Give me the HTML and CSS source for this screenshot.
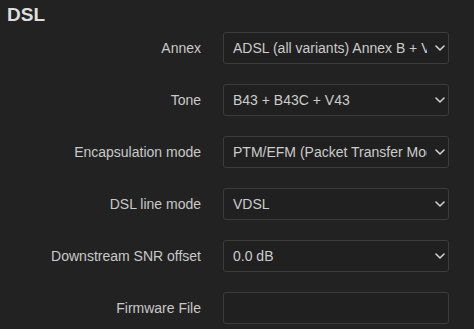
FILE: index.html
```html
<!DOCTYPE html>
<html>
<head>
<meta charset="utf-8">
<link rel="stylesheet" href="styles.css">
</head>
<body>
<div class="panel">
  <h3 class="title">DSL</h3>
  <div class="form">
    <label class="lbl">Annex</label>
    <div class="field">
      <select class="ctl"><option>ADSL (all variants) Annex B + V</option></select>
      <svg class="chev" viewBox="0 0 10 6"><path d="M1 1 L5 5 L9 1" fill="none" stroke="#cfcfcf" stroke-width="1.6" stroke-linecap="round" stroke-linejoin="round"/></svg>
    </div>
    <label class="lbl">Tone</label>
    <div class="field">
      <select class="ctl"><option>B43 + B43C + V43</option></select>
      <svg class="chev" viewBox="0 0 10 6"><path d="M1 1 L5 5 L9 1" fill="none" stroke="#cfcfcf" stroke-width="1.6" stroke-linecap="round" stroke-linejoin="round"/></svg>
    </div>
    <label class="lbl">Encapsulation mode</label>
    <div class="field">
      <select class="ctl"><option>PTM/EFM (Packet Transfer Mode)</option></select>
      <svg class="chev" viewBox="0 0 10 6"><path d="M1 1 L5 5 L9 1" fill="none" stroke="#cfcfcf" stroke-width="1.6" stroke-linecap="round" stroke-linejoin="round"/></svg>
    </div>
    <label class="lbl">DSL line mode</label>
    <div class="field">
      <select class="ctl"><option>VDSL</option></select>
      <svg class="chev" viewBox="0 0 10 6"><path d="M1 1 L5 5 L9 1" fill="none" stroke="#cfcfcf" stroke-width="1.6" stroke-linecap="round" stroke-linejoin="round"/></svg>
    </div>
    <label class="lbl">Downstream SNR offset</label>
    <div class="field">
      <select class="ctl"><option>0.0 dB</option></select>
      <svg class="chev" viewBox="0 0 10 6"><path d="M1 1 L5 5 L9 1" fill="none" stroke="#cfcfcf" stroke-width="1.6" stroke-linecap="round" stroke-linejoin="round"/></svg>
    </div>
    <label class="lbl">Firmware File</label>
    <div class="field">
      <input class="ctl input" type="text">
    </div>
  </div>
</div>
</body>
</html>
```

FILE: styles.css
```css
html, body {
  margin: 0;
  padding: 0;
  background: #222222;
}
body {
  font-family: "Liberation Sans", Arial, sans-serif;
  color: #c9c9c9;
  width: 474px;
  height: 329px;
  overflow: hidden;
}
.panel {
  padding: 5px 0 0 0;
}
.title {
  margin: 0 0 0 7px;
  font-size: 19px;
  line-height: 20px;
  font-weight: bold;
  color: #dedede;
  height: 27px;
}
.form {
  display: grid;
  grid-template-columns: 201px 226px;
  column-gap: 22px;
  row-gap: 20px;
  grid-auto-rows: 32px;
}
.lbl {
  font-size: 14px;
  text-align: right;
  align-self: center;
  color: #c9c9c9;
}
.field {
  position: relative;
  height: 32px;
}
.ctl {
  -webkit-appearance: none;
  appearance: none;
  box-sizing: border-box;
  width: 226px;
  height: 32px;
  margin: 0;
  padding: 0 21px 0 9px;
  background: #202020;
  border: 1px solid #3c3c3c;
  border-radius: 3px;
  color: #cccccc;
  font-family: "Liberation Sans", Arial, sans-serif;
  font-size: 14px;
  outline: none;
}
.input {
  padding-right: 8px;
}
.chev {
  position: absolute;
  right: 4px;
  top: 13px;
  width: 10px;
  height: 6px;
  pointer-events: none;
}
```
